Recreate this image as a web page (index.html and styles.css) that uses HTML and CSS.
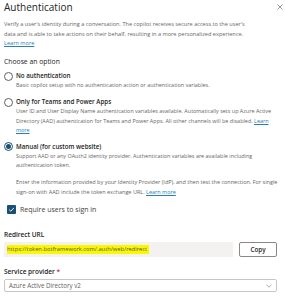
FILE: index.html
```html
<!DOCTYPE html>
<html lang="en">
<head>
<meta charset="utf-8">
<title>Authentication</title>
<link rel="stylesheet" href="styles.css">
</head>
<body>
<div class="panel">
  <header class="head">
    <h1 class="title">Authentication</h1>
    <svg class="close" width="6" height="6" viewBox="0 0 6 6"><path d="M0.5 0.5L5.5 5.5M5.5 0.5L0.5 5.5" stroke="#707070" stroke-width="0.7" fill="none"/></svg>
  </header>
  <p class="intro">Verify a user's identity during a conversation. The copilot receives secure access to the user's<br>data and is able to take actions on their behalf, resulting in a more personalized experience.<br><a class="link" href="#">Learn more</a></p>

  <div class="group-label">Choose an option</div>

  <div class="option opt1">
    <span class="radio"></span>
    <div class="opt-body">
      <div class="opt-title">No authentication</div>
      <div class="opt-desc">Basic copilot setup with no authentication action or authentication variables.</div>
    </div>
  </div>

  <div class="option opt2">
    <span class="radio"></span>
    <div class="opt-body">
      <div class="opt-title">Only for Teams and Power Apps</div>
      <div class="opt-desc">User ID and User Display Name authentication variables available. Automatically sets up Azure Active<br>Directory (AAD) authentication for Teams and Power Apps. All other channels will be disabled. <a class="link" href="#">Learn<br>more</a></div>
    </div>
  </div>

  <div class="option opt3">
    <span class="radio checked"></span>
    <div class="opt-body">
      <div class="opt-title">Manual (for custom website)</div>
      <div class="opt-desc">Support AAD or any OAuth2 identity provider. Authentication variables are available including<br>authentication token.</div>
    </div>
  </div>

  <p class="para">Enter the information provided by your Identity Provider (IdP), and then test the connection. For single<br>sign-on with AAD include the token exchange URL. <a class="link" href="#">Learn more</a></p>

  <label class="check-row">
    <span class="checkbox"><svg width="7" height="7" viewBox="0 0 7 7"><path d="M1.2 3.7L2.8 5.2L5.9 1.9" stroke="#fff" stroke-width="0.9" fill="none"/></svg></span>
    <span class="check-label">Require users to sign in</span>
  </label>

  <div class="field-label label-url">Redirect URL</div>
  <div class="url-row">
    <div class="url-field"><span class="hl">https://token.botframework.com/.auth/web/redirect</span></div>
    <button class="copy-btn">Copy</button>
  </div>

  <div class="field-label label-sp">Service provider <span class="req">*</span></div>
  <div class="dropdown">
    <span class="dd-text">Azure Active Directory v2</span>
    <svg class="chev" width="6" height="4" viewBox="0 0 6 4"><path d="M0.5 0.8L3 3.2L5.5 0.8" stroke="#707070" stroke-width="0.6" fill="none"/></svg>
  </div>
</div>
</body>
</html>
```

FILE: styles.css
```css
* { box-sizing: border-box; }
html, body { margin: 0; padding: 0; background: #fff; }
body {
  font-family: "Open Sans", "Noto Sans", sans-serif;
  color: #242424;
}
.panel {
  width: 285px;
  padding: 0 8px 0 4px;
}
.head {
  display: flex;
  align-items: center;
  justify-content: space-between;
  height: 15px;
  margin-right: -7px;
}
.title {
  margin: 0;
  font-size: 10px;
  line-height: 15px;
  font-weight: 400;
  color: #242424;
}
.close { margin-right: 1px; margin-top: -1px; }
.intro {
  margin: 5px 0 0;
  font-size: 5.6px;
  line-height: 9.5px;
  color: #666666;
  white-space: nowrap;
}
.link { color: #2a7fb2; text-decoration: underline; }
.group-label {
  margin-top: 8.5px;
  font-size: 6.8px;
  line-height: 10px;
  color: #242424;
}
.option {
  display: flex;
  gap: 3px;
}
.opt1 { margin-top: 4px; }
.opt2 { margin-top: 6.5px; }
.opt3 { margin-top: 6px; }
.radio {
  flex: none;
  width: 9px;
  height: 9px;
  margin-top: 0.5px;
  border: 0.8px solid #616161;
  border-radius: 50%;
  display: flex;
  align-items: center;
  justify-content: center;
}
.radio.checked { border-color: #1b5075; }
.radio.checked::after {
  content: "";
  width: 5px;
  height: 5px;
  border-radius: 50%;
  background: #1b5075;
}
.opt-title {
  font-size: 6.2px;
  line-height: 10px;
  font-weight: 600;
  color: #242424;
}
.opt-desc {
  font-size: 5.45px;
  line-height: 9.5px;
  color: #666666;
  white-space: nowrap;
}
.para {
  margin: 6.8px 0 0 12px;
  font-size: 5.5px;
  line-height: 10px;
  color: #666666;
  white-space: nowrap;
}
.check-row {
  display: flex;
  align-items: center;
  gap: 4px;
  height: 12px;
  margin: 6.2px 0 0 3px;
}
.checkbox {
  width: 9px;
  height: 9px;
  border-radius: 1px;
  background: #1b5075;
  display: flex;
  align-items: center;
  justify-content: center;
}
.check-label {
  font-size: 7px;
  color: #424242;
}
.field-label {
  font-size: 6.5px;
  line-height: 10px;
  font-weight: 600;
  color: #242424;
}
.label-url { margin-top: 15px; }
.label-sp { margin-top: 10px; }
.req { color: #c4314b; }
.url-row {
  display: flex;
  gap: 6px;
  margin-top: 2px;
  height: 14.5px;
}
.url-field {
  flex: 1;
  background: #f3f2f1;
  display: flex;
  align-items: center;
  padding-left: 3px;
}
.hl {
  background: #fbf700;
  font-size: 5.75px;
  line-height: 9px;
  color: #555555;
  padding-right: 2px;
}
.copy-btn {
  width: 38px;
  height: 14.5px;
  padding: 0;
  border: 0.8px solid #8a8886;
  border-radius: 2px;
  background: #fff;
  font-family: inherit;
  font-size: 6.3px;
  font-weight: 600;
  color: #242424;
}
.dropdown {
  margin-top: 2px;
  height: 13.5px;
  border: 0.8px solid #c8c6c4;
  border-radius: 2px;
  display: flex;
  align-items: center;
  justify-content: space-between;
  padding: 0 4px 0 4px;
}
.dd-text {
  font-size: 6.2px;
  color: #616161;
}
```
